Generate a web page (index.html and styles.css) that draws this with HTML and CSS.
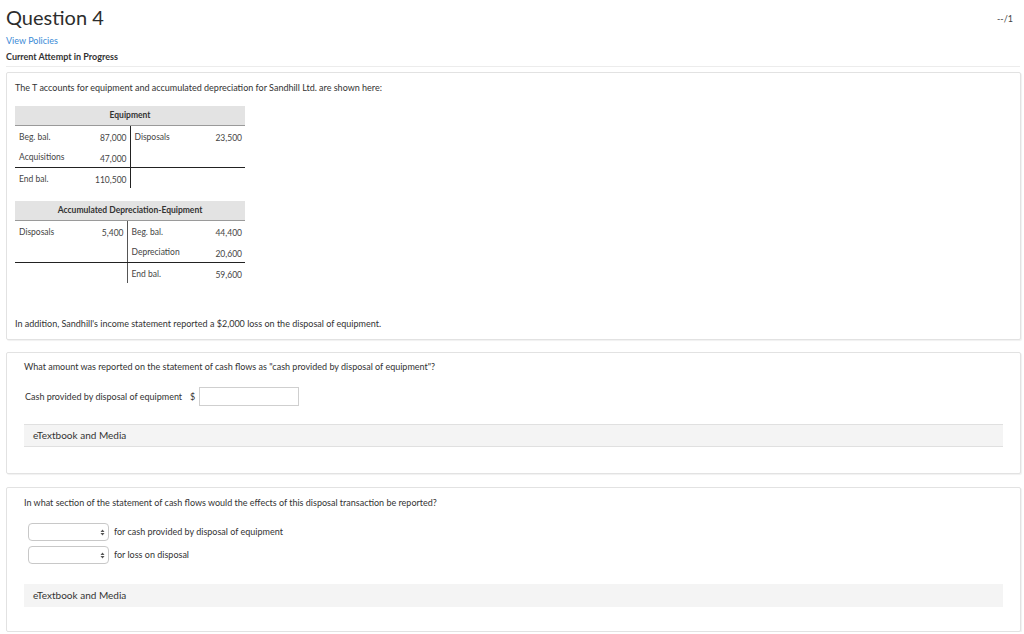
FILE: index.html
```html
<!DOCTYPE html>
<html>
<head>
<meta charset="utf-8">
<link rel="stylesheet" href="styles.css">
</head>
<body>
<div class="page">
  <div class="head">
    <h1 class="title">Question 4</h1>
    <span class="score">--/1</span>
  </div>
  <a class="policies" href="#">View Policies</a>
  <div class="attempt">Current Attempt in Progress</div>

  <div class="card card-intro">
    <p class="intro">The T accounts for equipment and accumulated depreciation for Sandhill Ltd. are shown here:</p>

    <table class="taccount t-equip">
      <thead><tr><th colspan="4">Equipment</th></tr></thead>
      <tbody>
        <tr><td class="lab">Beg. bal.</td><td class="amt vr">87,000</td><td class="lab">Disposals</td><td class="amt">23,500</td></tr>
        <tr class="ruled"><td class="lab">Acquisitions</td><td class="amt vr">47,000</td><td class="lab"></td><td class="amt"></td></tr>
        <tr><td class="lab">End bal.</td><td class="amt vr">110,500</td><td class="lab"></td><td class="amt"></td></tr>
      </tbody>
    </table>

    <table class="taccount t-accum">
      <thead><tr><th colspan="4">Accumulated Depreciation-Equipment</th></tr></thead>
      <tbody>
        <tr><td class="lab">Disposals</td><td class="amt vr">5,400</td><td class="lab">Beg. bal.</td><td class="amt">44,400</td></tr>
        <tr class="ruled"><td class="lab"></td><td class="amt vr"></td><td class="lab">Depreciation</td><td class="amt">20,600</td></tr>
        <tr><td class="lab"></td><td class="amt vr"></td><td class="lab">End bal.</td><td class="amt">59,600</td></tr>
      </tbody>
    </table>

    <p class="addition">In addition, Sandhill's income statement reported a $2,000 loss on the disposal of equipment.</p>
  </div>

  <div class="card card-q card-q1">
    <p class="prompt">What amount was reported on the statement of cash flows as "cash provided by disposal of equipment"?</p>
    <div class="answer-row">
      <span class="answer-label">Cash provided by disposal of equipment</span>
      <span class="dollar">$</span>
      <input class="amount-input" type="text">
    </div>
    <div class="media">eTextbook and Media</div>
  </div>

  <div class="card card-q card-q2">
    <p class="prompt">In what section of the statement of cash flows would the effects of this disposal transaction be reported?</p>
    <div class="select-row first">
      <div class="fake-select"><svg class="arrows" width="5" height="7" viewBox="0 0 5 7"><path d="M0.5 3 L2.5 0.6 L4.5 3 Z M0.5 4 L2.5 6.4 L4.5 4 Z" fill="#555"/></svg></div>
      <span class="select-label">for cash provided by disposal of equipment</span>
    </div>
    <div class="select-row">
      <div class="fake-select"><svg class="arrows" width="5" height="7" viewBox="0 0 5 7"><path d="M0.5 3 L2.5 0.6 L4.5 3 Z M0.5 4 L2.5 6.4 L4.5 4 Z" fill="#555"/></svg></div>
      <span class="select-label">for loss on disposal</span>
    </div>
    <div class="media media-2">eTextbook and Media</div>
  </div>
</div>
</body>
</html>
```

FILE: styles.css
```css
* { box-sizing: border-box; }
html, body { margin: 0; padding: 0; background: #fff; }
body {
  font-family: Lato, "Open Sans", "Liberation Sans", sans-serif;
  color: #333;
  font-size: 9px;
}
.page { padding: 0 3px 0 6px; }

.head {
  display: flex;
  justify-content: space-between;
  align-items: flex-start;
  height: 33px;
}
.title {
  margin: 5px 0 0 0;
  font-weight: 400;
  font-size: 20px;
  line-height: 24px;
  color: #2d2d2d;
}
.score {
  margin: 13px 8px 0 0;
  font-size: 9px;
  color: #444;
}
.policies {
  display: block;
  color: #3a8ad6;
  text-decoration: none;
  font-size: 9px;
  line-height: 16px;
}
.attempt {
  font-size: 9px;
  line-height: 16px;
  font-weight: 700;
  color: #333;
  padding-bottom: 1px;
  border-bottom: 1px solid #ececec;
  margin-right: 1px;
}

.card {
  border: 1px solid #e2e2e2;
  border-radius: 2px;
  box-shadow: 1px 1px 1px rgba(0,0,0,0.06);
  background: #fff;
}
.card-intro {
  margin-top: 5px;
  padding: 9px 8px 9px 8px;
}
.intro { margin: 0 0 12px 0; line-height: 12px; }

.taccount {
  border-collapse: collapse;
  width: 230px;
  font-size: 8.5px;
  color: #444;
}
.taccount th {
  background: #e3e3e3;
  border-bottom: 1px solid #9a9a9a;
  font-weight: 700;
  height: 19px;
  padding: 0;
  text-align: center;
  color: #333;
}
.taccount td { height: 21px; padding: 0; }
.taccount .lab { text-align: left; vertical-align: top; padding: 6px 0 0 4px; }
.taccount .amt { text-align: right; vertical-align: bottom; padding: 0 3px 3px 0; }
.taccount .vr { border-right: 1px solid #222; }
.taccount tr.ruled td { border-bottom: 1px solid #222; }

.t-equip td:nth-child(1) { width: 78px; }
.t-equip td:nth-child(2) { width: 37px; }
.t-equip td:nth-child(3) { width: 70px; }
.t-accum { margin-top: 13px; }
.t-accum td:nth-child(1) { width: 72px; }
.t-accum td:nth-child(2) { width: 40px; }
.t-accum td:nth-child(3) { width: 70px; }
.t-accum .vr { border-right-color: #555; }

.addition { margin: 35px 0 0 0; line-height: 12px; }

.card-q { padding: 8px 17px 0 17px; }
.card-q1 { height: 122px; margin-top: 12px; }
.card-q2 { height: 145px; margin-top: 13px; padding-top: 9px; }
.prompt { margin: 0; line-height: 12px; }

.answer-row {
  display: flex;
  align-items: center;
  margin-top: 14px;
  padding-left: 1px;
}
.answer-label { line-height: 12px; }
.dollar { margin-left: 8px; margin-right: 4px; }
.amount-input {
  width: 100px;
  height: 19px;
  border: 1px solid #cfcfcf;
  border-radius: 0;
  padding: 0;
  margin: 0;
  outline: none;
}
.media {
  margin-top: 18px;
  background: #f4f4f4;
  border-top: 1px solid #e0e0e0;
  border-bottom: 1px solid #e0e0e0;
  height: 23px;
  line-height: 21px;
  padding-left: 9px;
  font-size: 10px;
  color: #333;
}
.media-2 { margin-top: 20px; border: none; line-height: 23px; }

.select-row {
  display: flex;
  align-items: center;
  margin-left: 4px;
  margin-top: 5px;
  height: 18px;
}
.select-row.first { margin-top: 14px; }
.fake-select {
  width: 81px;
  height: 18px;
  border: 1px solid #c8c8c8;
  border-radius: 4px;
  display: flex;
  justify-content: flex-end;
  align-items: center;
  padding-right: 3px;
  background: #fff;
}
.arrows { display: block; }
.select-label { margin-left: 5px; line-height: 12px; }
```
